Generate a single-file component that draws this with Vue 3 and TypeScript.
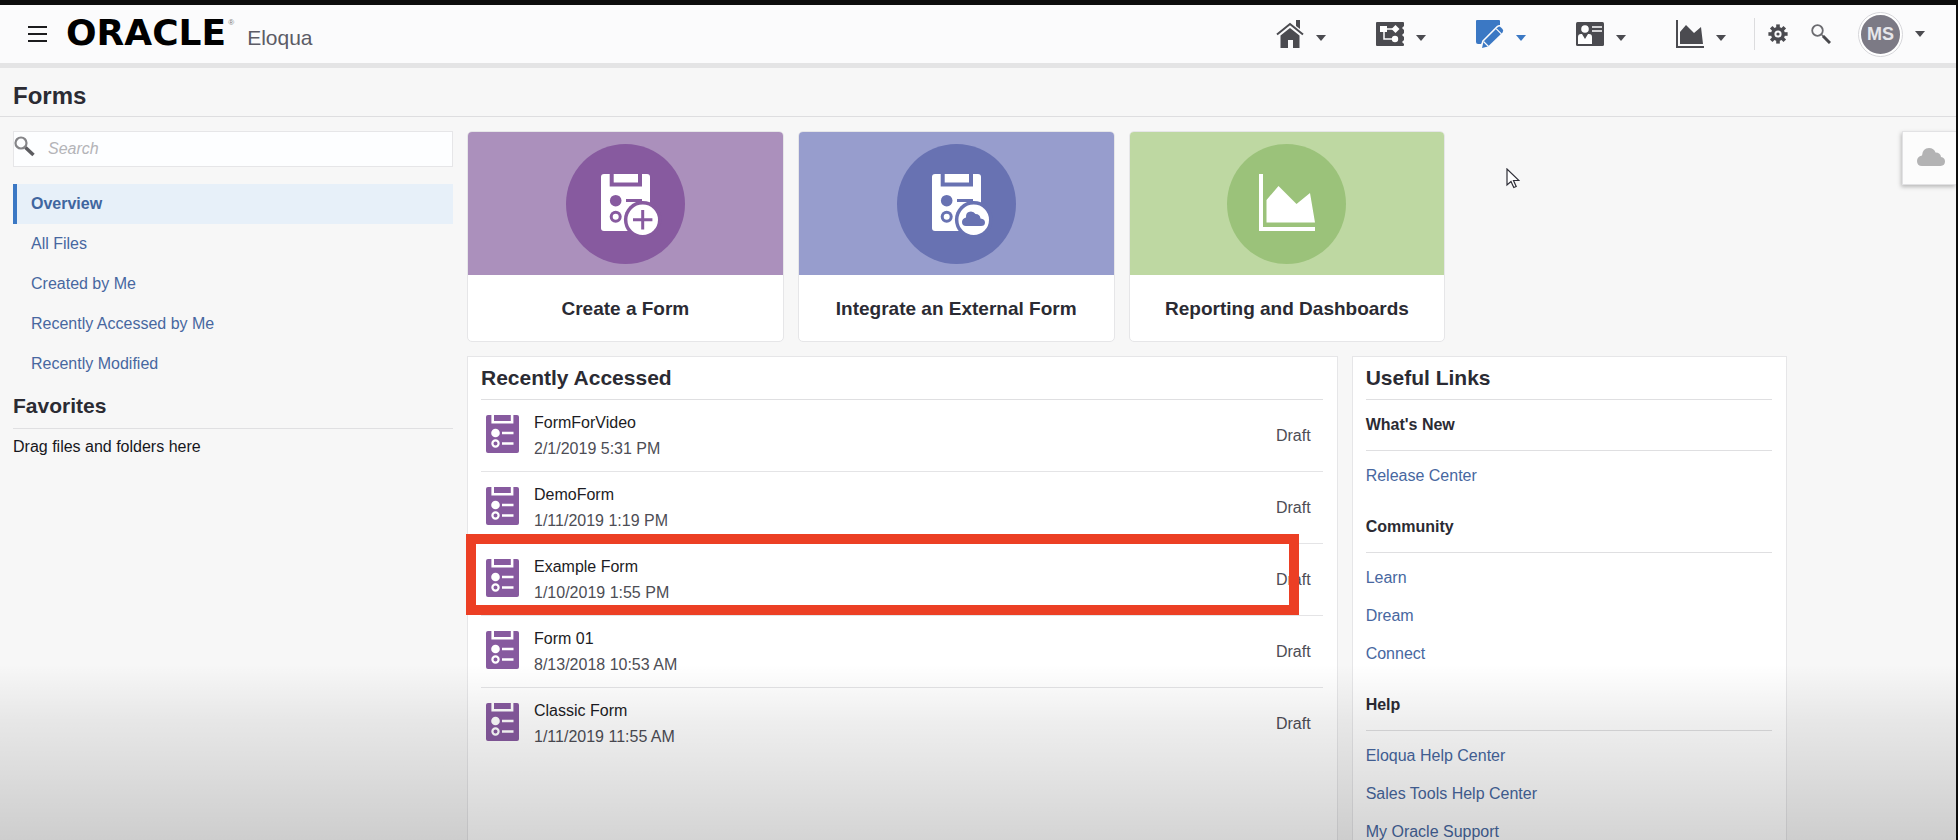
<script setup lang="ts">
import { ref } from 'vue'

interface NavItem {
  id: string
  label: string
  active?: boolean
}

interface RecentFile {
  name: string
  date: string
  status: string
  highlighted?: boolean
}

interface LinkGroup {
  title: string
  links: string[]
}

const query = ref('')

const navItems: NavItem[] = [
  { id: 'home', label: 'Home' },
  { id: 'orchestration', label: 'Orchestration' },
  { id: 'assets', label: 'Assets', active: true },
  { id: 'audience', label: 'Audience' },
  { id: 'reporting', label: 'Reporting' },
]

const filters = ref<string[]>([
  'Overview',
  'All Files',
  'Created by Me',
  'Recently Accessed by Me',
  'Recently Modified',
])
const currentFilter = ref('Overview')

const cards = [
  { id: 'create', label: 'Create a Form' },
  { id: 'integrate', label: 'Integrate an External Form' },
  { id: 'report', label: 'Reporting and Dashboards' },
]

const files: RecentFile[] = [
  { name: 'FormForVideo', date: '2/1/2019 5:31 PM', status: 'Draft' },
  { name: 'DemoForm', date: '1/11/2019 1:19 PM', status: 'Draft' },
  { name: 'Example Form', date: '1/10/2019 1:55 PM', status: 'Draft', highlighted: true },
  { name: 'Form 01', date: '8/13/2018 10:53 AM', status: 'Draft' },
  { name: 'Classic Form', date: '1/11/2019 11:55 AM', status: 'Draft' },
]

const linkGroups: LinkGroup[] = [
  { title: "What's New", links: ['Release Center'] },
  { title: 'Community', links: ['Learn', 'Dream', 'Connect'] },
  { title: 'Help', links: ['Eloqua Help Center', 'Sales Tools Help Center', 'My Oracle Support'] },
]
</script>

<template>
  <div class="app">
    <header class="topbar">
      <button class="icon-btn menu" type="button" aria-label="Menu">
        <svg width="20" height="18" viewBox="0 0 20 18">
          <path d="M0 2h19M0 9h19M0 16h19" stroke="#1c1c1e" stroke-width="2" />
        </svg>
      </button>
      <a class="brand" href="#">
        <span class="wordmark">ORACLE</span><span class="reg">®</span>
        <span class="product">Eloqua</span>
      </a>

      <nav class="main-nav">
        <button
          v-for="item in navItems"
          :key="item.id"
          type="button"
          class="icon-btn nav-btn"
          :class="{ active: item.active }"
          :aria-label="item.label"
        >
          <svg v-if="item.id === 'home'" width="28" height="28" viewBox="0 0 28 28">
            <path d="M1 14.500L14 4l13 10.500" fill="none" stroke="currentColor" stroke-width="2" />
            <path d="M20 0h4v9l-4-3z" fill="currentColor" />
            <path d="M4.500 15.500L14 8l9.500 7.500V28H17v-8h-5v8H4.500z" fill="currentColor" />
          </svg>
          <svg v-else-if="item.id === 'orchestration'" width="28" height="28" viewBox="0 0 28 28">
            <path d="M1 2h26q1 0 1 1v3l-2 2 2 2v3l-2 2 2 2v3l-2 2 2 2v1q0 1-1 1H1q-1 0-1-1V3q0-1 1-1z" fill="currentColor" />
            <path d="M10 9h7M8 12v7h9" fill="none" stroke="#fff" stroke-width="1.500" />
            <rect x="4" y="6" width="7" height="6" fill="#fff" />
            <path d="M19.500 5l4 4-4 4-4-4z" fill="#fff" />
            <circle cx="19" cy="19" r="3.200" fill="#fff" />
          </svg>
          <svg v-else-if="item.id === 'assets'" width="28" height="28" viewBox="0 0 28 28">
            <path d="M1 0h22q1 0 1 1v4L5 24H2q-2 0-2-2V1q0-1 1-1z" fill="currentColor" />
            <path d="M22 7q1.500-1 3 .5l1.500 1.500q1.500 1.500 0 3.500L12 26.500 6 28l1.500-6.500z" fill="currentColor" stroke="#fbfbfc" stroke-width="3" paint-order="stroke" />
            <path d="M7.500 21.500l5 5M20.300 8.800l5 5" stroke="#fbfbfc" stroke-width="1.200" />
          </svg>
          <svg v-else-if="item.id === 'audience'" width="28" height="28" viewBox="0 0 28 28">
            <rect y="2" width="28" height="24" rx="1.500" fill="currentColor" />
            <circle cx="9" cy="9" r="3.800" fill="#fff" />
            <path d="M2 24v-7q0-3 3-3h1l3 5 3-5h1q3 0 3 3v7z" fill="#fff" />
            <path d="M16 7h10M16 11h10" stroke="#d4d4d6" stroke-width="2" />
          </svg>
          <svg v-else width="28" height="28" viewBox="0 0 28 28">
            <path d="M1 0v27h27" fill="none" stroke="currentColor" stroke-width="2" />
            <path d="M4 24V12l6-7 8 8 7-6 2 17z" fill="currentColor" />
          </svg>
          <svg class="caret" width="10" height="14" viewBox="0 0 10 14">
            <path d="M0 8h10l-5 6z" fill="currentColor" />
          </svg>
        </button>
      </nav>

      <div class="tools">
        <button class="icon-btn" type="button" aria-label="Settings">
          <svg width="20" height="20" viewBox="-10 -10 20 20">
            <g fill="#4b4b50">
              <circle r="7" />
              <rect v-for="n in 4" :key="n" x="-1.800" y="-9.600" width="3.600" height="19.200" :transform="`rotate(${n * 45})`" />
            </g>
            <circle r="3.600" fill="#fbfbfc" />
            <circle r="1.600" fill="#4b4b50" />
          </svg>
        </button>
        <button class="icon-btn" type="button" aria-label="Search all">
          <svg width="20" height="20" viewBox="0 0 20 20">
            <circle cx="6.500" cy="6.500" r="5.300" fill="none" stroke="#6b6b70" stroke-width="1.800" />
            <path d="M10.500 10.500l2 2" stroke="#6b6b70" stroke-width="1.500" />
            <path d="M12 12l7 7" stroke="#48484c" stroke-width="3" />
          </svg>
        </button>
      </div>
      <button class="icon-btn user" type="button" aria-label="Account">
        <span class="avatar">MS</span>
        <svg width="10" height="6" viewBox="0 0 10 6"><path d="M0 0h10L5 6z" fill="currentColor" /></svg>
      </button>
    </header>

    <div class="title-row"><h1>Forms</h1></div>

    <div class="workspace">
      <aside class="sidebar">
        <label class="search">
          <svg width="21" height="21" viewBox="0 0 21 21">
            <circle cx="7" cy="7" r="5.500" fill="none" stroke="#858588" stroke-width="2.200" />
            <path d="M11.500 11.500l8 7.500" stroke="#5c5c60" stroke-width="3.500" />
          </svg>
          <input v-model="query" type="text" placeholder="Search" aria-label="Search forms" />
        </label>
        <nav class="filters">
          <a
            v-for="filter in filters"
            :key="filter"
            href="#"
            :class="{ current: filter === currentFilter }"
            @click.prevent="currentFilter = filter"
          >{{ filter }}</a>
        </nav>
        <h2 class="favorites">Favorites</h2>
        <p class="drop-hint">Drag files and folders here</p>
      </aside>

      <main class="content">
        <div class="cards">
          <a v-for="card in cards" :key="card.id" href="#" class="card" :class="card.id">
            <span class="art">
              <svg width="119" height="120" viewBox="0 0 119 120">
                <ellipse class="disc" cx="59.500" cy="60" rx="59.500" ry="60" />
                <g v-if="card.id === 'report'" fill="#fff">
                  <path d="M32 30h4v53h52v4H32z" />
                  <path d="M39.500 56L51.500 42l18 18L83 49l5 29.500H39.500z" />
                </g>
                <g v-else>
                  <rect x="35" y="30" width="49" height="57" rx="3" fill="#fff" />
                  <path class="disc" d="M43.700 30H76v12.500H43.700z" />
                  <path d="M47.700 30H72v8.500H47.700z" fill="#fff" />
                  <circle class="disc" cx="49.700" cy="56.700" r="5.800" />
                  <circle class="disc" cx="49.700" cy="72.700" r="6" />
                  <circle cx="49.700" cy="72.700" r="3" fill="#fff" />
                  <path class="disc" d="M60 55h16v3H60z" />
                  <circle class="disc" cx="76.700" cy="75.700" r="18.800" />
                  <circle cx="76.700" cy="75.700" r="15.300" fill="#fff" />
                  <path v-if="card.id === 'create'" class="disc" d="M75.200 66h3v8.200h8.200v3h-8.200v8.200h-3v-8.200H67v-3h8.200z" />
                  <path v-else class="disc" d="M69 82q-4 0-4-4 0-3.500 4-4.500-.500-6 5-6 3 0 4.500 2.500 4.500 0 5 4.500 4.500.500 4.500 4 0 3.500-4 3.500z" />
                </g>
              </svg>
            </span>
            <span class="card-label">{{ card.label }}</span>
          </a>
        </div>

        <div class="panels">
          <section class="panel recent">
            <h2>Recently Accessed</h2>
            <ul>
              <li v-for="file in files" :key="file.name" :class="{ highlighted: file.highlighted }">
                <svg class="file-icon" width="33" height="38" viewBox="0 0 33 38">
                  <rect width="33" height="38" rx="2" fill="#875a9f" />
                  <path d="M6.700 0v7.200h19.400V0" fill="none" stroke="#fff" stroke-width="2.600" />
                  <circle cx="9.500" cy="18" r="4.300" fill="#fff" />
                  <circle cx="9.500" cy="28.500" r="3.100" fill="none" stroke="#fff" stroke-width="2.200" />
                  <path d="M16 18h11.500M16 28.500h11.500" stroke="#fff" stroke-width="2.400" />
                </svg>
                <div class="file-text">
                  <a href="#">{{ file.name }}</a>
                  <span>{{ file.date }}</span>
                </div>
                <span class="status">{{ file.status }}</span>
              </li>
            </ul>
          </section>

          <section class="panel links">
            <h2>Useful Links</h2>
            <template v-for="group in linkGroups" :key="group.title">
              <h3>{{ group.title }}</h3>
              <ul>
                <li v-for="link in group.links" :key="link"><a href="#">{{ link }}</a></li>
              </ul>
            </template>
          </section>
        </div>
      </main>
    </div>

    <button class="cloud-tab" type="button" aria-label="Cloud menu">
      <svg width="28" height="18" viewBox="0 0 28 18">
        <path d="M5 18q-5 0-5-5 0-4.500 5-5.500Q5.500 0 12 0q5 0 6.500 4.500 5 0 5.500 4.500 4 .5 4 4.500T23.500 18z" fill="#b3b3b4" />
      </svg>
    </button>
    <svg class="pointer" width="14" height="21" viewBox="0 0 14 21">
      <path d="M1 1v16l4-3.500 2.800 6 2.400-1-2.700-6H13z" fill="#fff" stroke="#2f2f38" stroke-width="1.200" />
    </svg>
    <div class="shade"></div>
  </div>
</template>

<style>
body {
  margin: 0;
}
</style>

<style scoped>
* {
  box-sizing: border-box;
}

.app {
  position: relative;
  display: flex;
  flex-direction: column;
  height: 100vh;
  overflow: hidden;
  border-top: 5px solid #0d0d0d;
  border-right: 2px solid #0d0d0d;
  background: #f7f7f7;
  color: #2b2b33;
  font: 16px/20px 'Liberation Sans', Arial, sans-serif;
}

h1,
h2,
h3,
p,
ul {
  margin: 0;
  padding: 0;
}

ul {
  list-style: none;
}

a {
  color: #4767a0;
  text-decoration: none;
}

svg {
  display: block;
  flex: none;
}

.topbar {
  display: flex;
  flex: none;
  align-items: center;
  height: 63px;
  padding: 0 31px 0 28px;
  border-bottom: 5px solid #e4e4e5;
  background: #fbfbfc;
}

.icon-btn {
  display: flex;
  align-items: center;
  padding: 0;
  border: 0;
  background: none;
  color: #4b4b50;
  cursor: pointer;
}

.brand {
  display: flex;
  align-items: baseline;
  margin-left: 18px;
  padding-bottom: 2px;
  color: #000;
}

.wordmark {
  font: bold 36px/40px 'DejaVu Sans', sans-serif;
}

.reg {
  align-self: flex-start;
  width: 21px;
  padding-left: 2px;
  color: #777;
  font-size: 8px;
}

.product {
  color: #5c5c66;
  font-size: 21px;
}

.main-nav {
  display: flex;
  gap: 50px;
  margin-left: auto;
}

.nav-btn {
  gap: 12px;
}

.nav-btn.active {
  color: #3b78c4;
}

.tools {
  display: flex;
  align-items: center;
  gap: 23px;
  height: 32px;
  margin-left: 28px;
  padding-left: 13px;
  border-left: 1px solid #dcdcde;
}

.user {
  gap: 12px;
  margin-left: 27px;
}

.avatar {
  display: flex;
  align-items: center;
  justify-content: center;
  width: 45px;
  height: 45px;
  border: 3px solid #fff;
  border-radius: 50%;
  outline: 1px solid #d6d6da;
  outline-offset: -1px;
  background: #7c7a85;
  color: #e6e6ea;
  font: bold 18px/20px 'Liberation Sans', Arial, sans-serif;
}

.title-row {
  flex: none;
  padding: 8px 13px 0;
  border-bottom: 1px solid #dedee0;
}

.title-row h1 {
  font-size: 24px;
  line-height: 40px;
}

.workspace {
  display: flex;
  flex: 1;
  gap: 14px;
  min-height: 0;
  padding: 14px 169px 0 13px;
}

.sidebar {
  flex: none;
  width: 440px;
}

.search {
  display: flex;
  align-items: center;
  gap: 13px;
  height: 36px;
  border: 1px solid #e6e6e8;
  background: #fdfeff;
}

.search svg {
  align-self: flex-start;
  margin-top: 4px;
}

.search input {
  flex: 1;
  min-width: 0;
  height: 34px;
  padding: 0;
  border: 0;
  outline: 0;
  background: none;
  color: #2b2b33;
  font: inherit;
}

.search input::placeholder {
  color: #b4b4b8;
  font-style: italic;
}

.filters {
  display: flex;
  flex-direction: column;
  margin-top: 17px;
}

.filters a {
  padding-left: 14px;
  border-left: 4px solid transparent;
  line-height: 40px;
}

.filters .current {
  border-color: #3b78c4;
  background: #e7f0f9;
  color: #40669f;
  font-weight: bold;
}

.favorites {
  border-bottom: 1px solid #e0e0e2;
  font-size: 21px;
  line-height: 44px;
}

.drop-hint {
  color: #16161c;
  line-height: 36px;
}

.content {
  flex: 1;
  min-width: 0;
}

.cards {
  display: grid;
  grid-template-columns: repeat(3, 24%);
  gap: 14px;
}

.card {
  overflow: hidden;
  border: 1px solid #e6e6e8;
  border-radius: 5px;
  background: #fff;
  color: #2b2b33;
  font-size: 19px;
  font-weight: bold;
  text-align: center;
}

.art {
  display: flex;
  align-items: center;
  justify-content: center;
  height: 143px;
}

.card-label {
  display: block;
  padding-top: 2px;
  line-height: 64px;
}

.create .art {
  background: #ab90bc;
}

.create .disc {
  fill: #875a9f;
}

.integrate .art {
  background: #979dcd;
}

.integrate .disc {
  fill: #6872b2;
}

.report .art {
  background: #bed8a2;
}

.report .disc {
  fill: #9bc27a;
}

.panels {
  display: grid;
  grid-template-columns: 2fr 1fr;
  gap: 14px;
  margin-top: 14px;
}

.panel {
  padding: 0 14px 14px 13px;
  border: 1px solid #e6e6e8;
  background: #fff;
}

.panel h2 {
  border-bottom: 1px solid #dfdfe1;
  font-size: 21px;
  line-height: 42px;
}

.recent li {
  position: relative;
  display: flex;
  align-items: center;
  height: 72px;
  padding: 0 12px 0 5px;
  border-bottom: 1px solid #e4e4e6;
}

.recent li:last-child {
  border-bottom: 0;
}

.file-icon {
  align-self: flex-start;
  margin-top: 15px;
}

.file-text {
  display: flex;
  flex: 1;
  flex-direction: column;
  margin-left: 15px;
  color: #4d4d55;
  line-height: 26px;
}

.file-text a {
  color: #1c1c24;
}

.status {
  color: #4d4d55;
}

.highlighted::after {
  position: absolute;
  inset: -10px 24px 0 -15px;
  border: 10px solid #ec3f24;
  content: '';
  pointer-events: none;
}

.links h3 {
  border-bottom: 1px solid #dfdfe1;
  font-size: 16px;
  line-height: 50px;
}

.links ul {
  padding: 6px 0 7px;
}

.links li {
  line-height: 38px;
}

.cloud-tab {
  position: absolute;
  top: 126px;
  right: 0;
  display: flex;
  align-items: center;
  width: 54px;
  height: 54px;
  padding: 0 0 2px 14px;
  border: 1px solid #e2e2e4;
  border-right: 0;
  background: #fcfcfc;
  box-shadow: -1px 2px 4px rgba(0, 0, 0, 0.25);
}

.pointer {
  position: absolute;
  top: 163px;
  left: 77%;
}

.shade {
  position: absolute;
  right: 0;
  bottom: 0;
  left: 0;
  height: 176px;
  background: linear-gradient(rgba(0, 0, 0, 0), rgba(0, 0, 0, 0.065) 33%, rgba(0, 0, 0, 0.13) 75%, rgba(0, 0, 0, 0.17));
  pointer-events: none;
}
</style>
